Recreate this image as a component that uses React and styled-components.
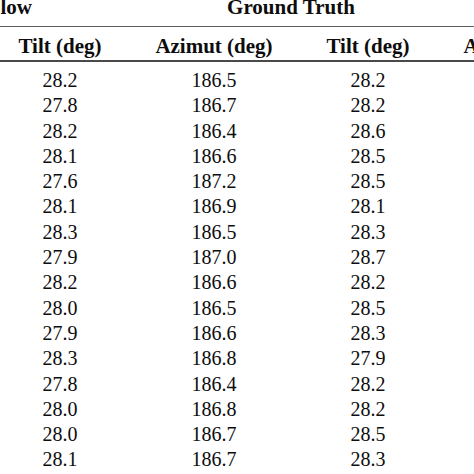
import React from "react";
import styled, { createGlobalStyle } from "styled-components";

const Global = createGlobalStyle`
  html, body { margin: 0; padding: 0; background: #fff; overflow: hidden; }
  body { width: 474px; height: 474px; font-family: "Liberation Serif", "Times New Roman", serif; color: #0d0d0d; }
`;

const Table = styled.div`
  margin-left: -17px;
  width: 616px;
  display: grid;
  grid-template-columns: repeat(4, 154px);
`;

const GroupRow = styled.div`
  grid-column: 1 / -1;
  display: grid;
  grid-template-columns: repeat(4, 154px);
  margin-top: -3px;
  height: 29px;
  border-bottom: 1px solid #5e5e5e;
  font-weight: bold;
  font-size: 21px;
  line-height: 21px;
`;

const GroupCell = styled.div`
  grid-column: ${(p) => p.$span};
  text-align: ${(p) => p.$align || "center"};
  padding-right: ${(p) => p.$pr || 0}px;
  white-space: nowrap;
  overflow: hidden;
`;

const HeaderRow = styled.div`
  grid-column: 1 / -1;
  display: grid;
  grid-template-columns: repeat(4, 154px);
  height: 35px;
  padding-top: 3px;
  box-sizing: border-box;
  border-bottom: 2px solid #4a4a4a;
  font-weight: bold;
  font-size: 21px;
  line-height: 32px;
`;

const HeadCell = styled.div`
  text-align: center;
  white-space: nowrap;
`;

const Body = styled.div`
  grid-column: 1 / -1;
  padding-top: 6px;
`;

const Row = styled.div`
  display: grid;
  grid-template-columns: repeat(4, 154px);
  height: 25.3px;
  font-size: 20px;
  line-height: 25.3px;
`;

const Cell = styled.div`
  text-align: center;
`;

const data = [
  ["28.2", "186.5", "28.2"],
  ["27.8", "186.7", "28.2"],
  ["28.2", "186.4", "28.6"],
  ["28.1", "186.6", "28.5"],
  ["27.6", "187.2", "28.5"],
  ["28.1", "186.9", "28.1"],
  ["28.3", "186.5", "28.3"],
  ["27.9", "187.0", "28.7"],
  ["28.2", "186.6", "28.2"],
  ["28.0", "186.5", "28.5"],
  ["27.9", "186.6", "28.3"],
  ["28.3", "186.8", "27.9"],
  ["27.8", "186.4", "28.2"],
  ["28.0", "186.8", "28.2"],
  ["28.0", "186.7", "28.5"],
  ["28.1", "186.7", "28.3"],
];

export default function App() {
  return (
    <>
      <Global />
      <Table>
        <GroupRow>
          <GroupCell $span="1 / 2" $align="right" $pr={105}>low</GroupCell>
          <GroupCell $span="2 / 4">Ground Truth</GroupCell>
        </GroupRow>
        <HeaderRow>
          <HeadCell>Tilt (deg)</HeadCell>
          <HeadCell>Azimut (deg)</HeadCell>
          <HeadCell>Tilt (deg)</HeadCell>
          <HeadCell>Azimut (deg)</HeadCell>
        </HeaderRow>
        <Body>
          {data.map((r, i) => (
            <Row key={i}>
              {r.map((v, j) => (
                <Cell key={j}>{v}</Cell>
              ))}
              <Cell />
            </Row>
          ))}
        </Body>
      </Table>
    </>
  );
}
